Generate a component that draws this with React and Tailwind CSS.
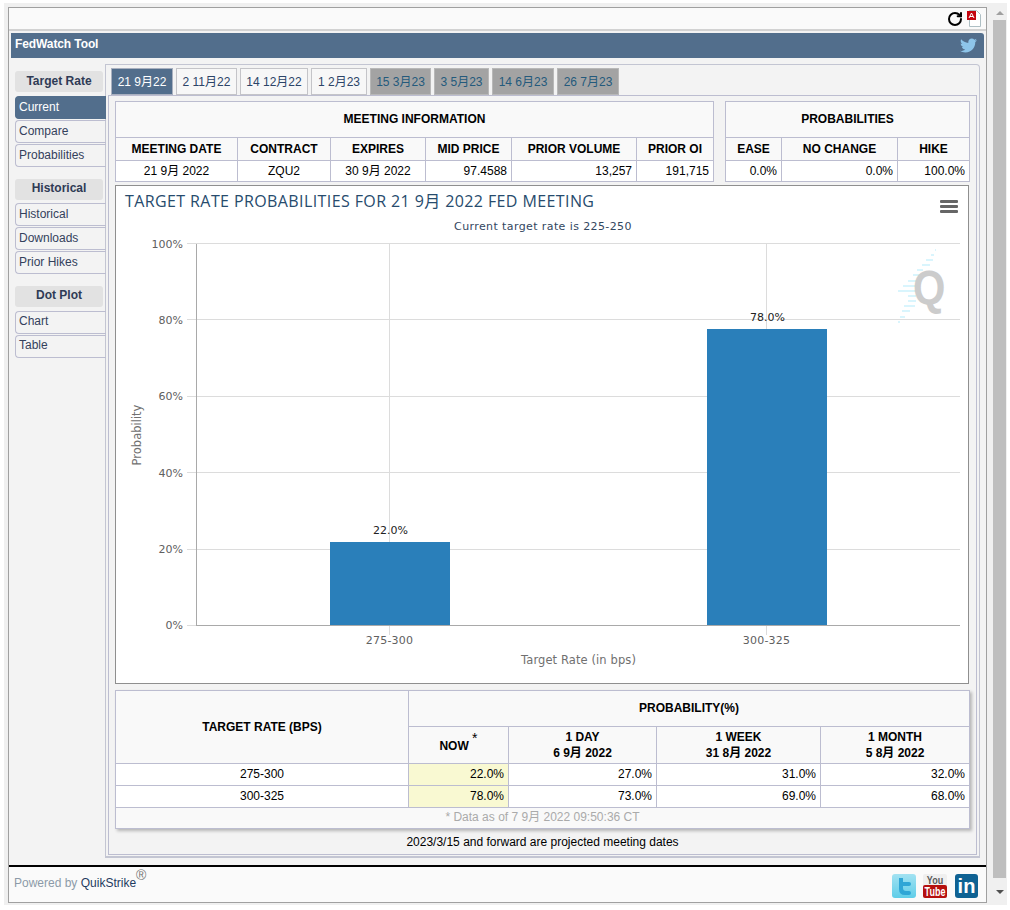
import { RotateCw } from "lucide-react";
import { FaTwitter } from "react-icons/fa";

const LINE = "border-[#bcbdd0]";

const TABS = [
  { label: "21 9月22", w: "w-[62px]", active: true },
  { label: "2 11月22", w: "w-[61px]" },
  { label: "14 12月22", w: "w-[68px]" },
  { label: "1 2月23", w: "w-[56px]" },
  { label: "15 3月23", w: "w-[61px]", off: true },
  { label: "3 5月23", w: "w-[55px]", off: true },
  { label: "14 6月23", w: "w-[62px]", off: true },
  { label: "26 7月23", w: "w-[62px]", off: true },
];

const NAV = [
  { title: "Target Rate", head: "mb-1 pb-[2px]", items: ["Current", "Compare", "Probabilities"] },
  { title: "Historical", head: "mb-[3px] pb-1", items: ["Historical", "Downloads", "Prior Hikes"] },
  { title: "Dot Plot", head: "mb-1 pb-1", items: ["Chart", "Table"] },
];

function SideNav() {
  return (
    <div className="relative z-10 -mr-px flex w-[97px] shrink-0 flex-col pt-[7px] pl-[6px]">
      {NAV.map((g) => (
        <div key={g.title} className="mb-[11px]">
          <div className={"mr-[3px] flex h-[21px] w-[88px] items-center justify-center rounded-[3px] bg-[#e2e2e2] text-xs font-bold text-[#2f3b55] " + g.head}>
            {g.title}
          </div>
          {g.items.map((it) => (
            <div
              key={it}
              className={
                "mb-px flex h-[23px] items-center rounded-l-[4px] border border-r-0 pl-[3px] text-xs " +
                (it === "Chart" || it === "Table" ? "pb-1 " : "pb-[2px] ") +
                (it === "Current"
                  ? "border-[#526e8c] bg-[#526e8c] text-white"
                  : LINE + " text-[#33415c]")
              }
            >
              {it}
            </div>
          ))}
        </div>
      ))}
    </div>
  );
}

function Th({ children, className = "", ...rest }) {
  return (
    <th {...rest} className={"border " + LINE + " bg-[#f9f9f9] p-0 text-center text-xs font-bold text-black " + className}>
      {children}
    </th>
  );
}

function Td({ children, className = "bg-white", align = "text-right pr-1" }) {
  return <td className={"border " + LINE + " p-0 text-xs text-black " + align + " " + className}>{children}</td>;
}

function InfoTables() {
  return (
    <div className="flex justify-between pr-[6px] pl-[6px]">
      <table className="w-[598px] table-fixed border-collapse">
        <colgroup>
          <col className="w-[122px]" />
          <col className="w-[93px]" />
          <col className="w-[95px]" />
          <col className="w-[86px]" />
          <col className="w-[125px]" />
          <col className="w-[77px]" />
        </colgroup>
        <tbody>
          <tr className="h-[36px]">
            <Th colSpan={6} className="pb-[2px]">MEETING INFORMATION</Th>
          </tr>
          <tr className="h-[23px]">
            {["MEETING DATE", "CONTRACT", "EXPIRES", "MID PRICE", "PRIOR VOLUME", "PRIOR OI"].map((h) => (
              <Th key={h}>{h}</Th>
            ))}
          </tr>
          <tr className="h-[21px]">
            <Td align="text-center">21 9月 2022</Td>
            <Td align="text-center">ZQU2</Td>
            <Td align="text-center">30 9月 2022</Td>
            <Td>97.4588</Td>
            <Td>13,257</Td>
            <Td>191,715</Td>
          </tr>
        </tbody>
      </table>
      <table className="w-[244px] table-fixed border-collapse">
        <colgroup>
          <col className="w-[56px]" />
          <col className="w-[116px]" />
          <col className="w-[72px]" />
        </colgroup>
        <tbody>
          <tr className="h-[36px]">
            <Th colSpan={3} className="pb-[2px]">PROBABILITIES</Th>
          </tr>
          <tr className="h-[23px]">
            <Th>EASE</Th>
            <Th>NO CHANGE</Th>
            <Th>HIKE</Th>
          </tr>
          <tr className="h-[21px]">
            <Td>0.0%</Td>
            <Td>0.0%</Td>
            <Td>100.0%</Td>
          </tr>
        </tbody>
      </table>
    </div>
  );
}

const STREAK = [
  [819, 820, 64], [815, 818, 69], [810, 817, 74], [806, 814, 79], [801, 807, 84],
  [797, 804, 89], [792, 801, 95], [787, 800, 100], [782, 800, 105], [792, 800, 110],
  [792, 800, 115], [788, 799, 120], [786, 794, 125], [784, 789, 131], [782, 784, 136],
];

// value, grid line y, label baseline y
const TICKS = [
  [0, 439.5, 443],
  [20, 363.5, 367],
  [40, 286.5, 291],
  [60, 210.5, 214],
  [80, 133.5, 138],
  [100, 57.5, 62],
];

function Chart() {
  return (
    <div className="mt-[3px] ml-[6px] h-[499px] w-[854px] border border-[#8f8f8f] bg-white">
      <svg width="852" height="497" className="block font-['DejaVu_Sans','Noto_Sans_CJK_SC',sans-serif]">
        <text x="9" y="21" fontSize="16" fill="#274b6d" className="font-['Open_Sans','Noto_Sans_CJK_SC',sans-serif]" letterSpacing="0.4">
          TARGET RATE PROBABILITIES FOR 21 9月 2022 FED MEETING
        </text>
        <text x="427" y="44" fontSize="11" fill="#33475f" textAnchor="middle" letterSpacing="0.4">
          Current target rate is 225-250
        </text>

        {TICKS.map(([t, line, label]) => (
          <g key={t}>
            <line x1="71" x2={t > 0 ? 844 : 81} y1={line} y2={line} stroke="#dcdcdc" />
            <text x="67" y={label} fontSize="11" fill="#606060" textAnchor="end">
              {t}%
            </text>
          </g>
        ))}
        <line x1="273.5" x2="273.5" y1="58" y2="449" stroke="#dcdcdc" />
        <line x1="650.5" x2="650.5" y1="58" y2="449" stroke="#dcdcdc" />
        <line x1="80.5" x2="80.5" y1="58" y2="440" stroke="#a9a9a9" />
        <line x1="81" x2="844" y1="439.5" y2="439.5" stroke="#a9a9a9" />

        <rect x="214" y="356" width="120" height="83" fill="#2a7fba" />
        <rect x="591" y="143" width="120" height="296" fill="#2a7fba" />
        <text x="274.5" y="348" fontSize="11" fill="#222222" textAnchor="middle">22.0%</text>
        <text x="651.5" y="135" fontSize="11" fill="#222222" textAnchor="middle">78.0%</text>

        <text x="273.5" y="458" fontSize="11" fill="#606060" textAnchor="middle" letterSpacing="0.2">275-300</text>
        <text x="650.5" y="458" fontSize="11" fill="#606060" textAnchor="middle" letterSpacing="0.2">300-325</text>
        <text x="462.5" y="478" fontSize="11.5" fill="#707070" textAnchor="middle" letterSpacing="0.1">Target Rate (in bps)</text>
        <text transform="translate(25 249) rotate(-90)" fontSize="11.5" fill="#707070" textAnchor="middle">Probability</text>

        {/* menu button */}
        <rect x="824" y="14" width="18" height="3" rx="1" fill="#666666" />
        <rect x="824" y="19" width="18" height="3" rx="1" fill="#666666" />
        <rect x="824" y="24" width="18" height="3" rx="1" fill="#666666" />

        {/* watermark */}
        {STREAK.map(([a, b, c]) => (
          <line key={c} x1={a} x2={b} y1={c} y2={c} stroke="#cdf2fc" strokeWidth="1.5" />
        ))}
        <text transform="translate(797 118) scale(0.85 1)" fontSize="49" fontWeight="700" fill="#cccccc" className="font-['Liberation_Sans',sans-serif]">
          Q
        </text>
      </svg>
    </div>
  );
}

function RateTable() {
  const rows = [
    ["275-300", "22.0%", "27.0%", "31.0%", "32.0%"],
    ["300-325", "78.0%", "73.0%", "69.0%", "68.0%"],
  ];
  return (
    <table className="mt-[6px] ml-[6px] w-[854px] table-fixed border-collapse shadow-[2px_2px_3px_rgba(0,0,0,0.25)]">
      <colgroup>
        <col className="w-[293px]" />
        <col className="w-[100px]" />
        <col className="w-[148px]" />
        <col className="w-[164px]" />
        <col className="w-[149px]" />
      </colgroup>
      <tbody>
        <tr className="h-[36px]">
          <Th rowSpan={2}>TARGET RATE (BPS)</Th>
          <Th colSpan={4} className="pb-[2px]">PROBABILITY(%)</Th>
        </tr>
        <tr className="h-[37px]">
          <Th>
            NOW <sup className="text-sm font-normal">*</sup>
          </Th>
          <Th>1 DAY<br />6 9月 2022</Th>
          <Th>1 WEEK<br />31 8月 2022</Th>
          <Th>1 MONTH<br />5 8月 2022</Th>
        </tr>
        {rows.map((r) => (
          <tr key={r[0]} className="h-[22px]">
            <Td align="text-center pb-[2px]">{r[0]}</Td>
            <Td align="text-right pr-1 pb-[2px]" className="bg-[#f9f9d2]">{r[1]}</Td>
            <Td align="text-right pr-1 pb-[2px]">{r[2]}</Td>
            <Td align="text-right pr-1 pb-[2px]">{r[3]}</Td>
            <Td align="text-right pr-1 pb-[2px]">{r[4]}</Td>
          </tr>
        ))}
        <tr className="h-[21px]">
          <td colSpan={5} className={"border " + LINE + " bg-[#f9f9f9] p-0 pb-[2px] text-center text-xs text-[#aaaaaa]"}>
            * Data as of 7 9月 2022 09:50:36 CT
          </td>
        </tr>
      </tbody>
    </table>
  );
}

function Tabs() {
  return (
    <div className="flex h-[30px] gap-[3px] pt-[3px] pl-[5px]">
      {TABS.map((t) => (
        <div
          key={t.label}
          className={
            "flex h-[27px] items-center justify-center border text-xs " + t.w + " " +
            (t.active
              ? "border-[#a9b0bf] bg-[#526e8c] text-white"
              : t.off
                ? "border-[#b8b8b8] bg-[#a3a3a3] text-[#245a7c]"
                : "border-[#c4c4c8] bg-[#f7f7f7] text-[#2c4468]")
          }
        >
          {t.label}
        </div>
      ))}
    </div>
  );
}

function SocialIcons() {
  return (
    <div className="flex gap-[7px] pt-[7px] pr-2">
      <svg width="24" height="24" viewBox="0 0 24 24">
        <defs>
          <linearGradient id="tw" x1="0" y1="0" x2="0" y2="1">
            <stop offset="0" stopColor="#a2e2f2" />
            <stop offset="1" stopColor="#5fcde8" />
          </linearGradient>
        </defs>
        <rect width="24" height="24" rx="3" fill="url(#tw)" />
        <path d="M7 4 h4 v4 h6 q2 0 2 2 t-2 2 h-6 v2 q0 3 3 3 h3 q2 0 2 2 t-2 2 h-4 q-6 0 -6 -6 z" fill="#2fa6d6" />
      </svg>
      <svg width="24" height="24" viewBox="0 0 24 24" className="font-['Liberation_Sans',sans-serif]">
        <rect width="24" height="24" rx="2" fill="#efefef" />
        <rect y="11" width="24" height="13" rx="2" fill="#b5100f" />
        <text transform="translate(12 10) scale(1 1.3)" fontSize="9" fontWeight="700" fill="#5a5a5a" textAnchor="middle">You</text>
        <text transform="translate(12 22) scale(1 1.4)" fontSize="9" fontWeight="700" fill="#ffffff" textAnchor="middle">Tube</text>
      </svg>
      <svg width="23" height="24" viewBox="0 0 23 24" className="ml-px font-['Liberation_Sans',sans-serif]">
        <rect width="23" height="24" rx="3" fill="#0f6293" />
        <text x="11.5" y="19" fontSize="20" fontWeight="700" fill="#ffffff" textAnchor="middle">in</text>
      </svg>
    </div>
  );
}

export default function App() {
  return (
    <div className="h-[910px] w-[1010px] bg-white pt-[3px] pl-1 font-['Liberation_Sans','Noto_Sans_CJK_SC',sans-serif]">
      <div className="flex h-[902px] w-[1003px] bg-[#f0f0f0] pt-1 pl-1">
        <div className="flex h-[896px] w-[979px] shrink-0 flex-col border border-[#a0a0a0] bg-[#f3f3f3]">
          {/* toolbar */}
          <div className="flex h-[23px] shrink-0 items-center justify-end gap-[4px] border-b-2 border-[#d2d2d2] bg-[#fafafa] pr-[5px]">
            <RotateCw size={16} strokeWidth={3} className="text-black" />
            <svg width="14" height="17" viewBox="0 0 14 17">
              <path d="M2.5 .5 h7 l4 4 v12 h-11 z" fill="#ffffff" stroke="#aebfc4" />
              <rect x="0" y="1" width="9" height="9" fill="#c4040f" />
              <path d="M2 8 l2.5 -5 l2.5 5 M3 6.5 h3" fill="none" stroke="#ffffff" />
            </svg>
          </div>

          <div className="mx-[2px] mt-[2px] flex h-[25px] shrink-0 items-center justify-between rounded-tr-[3px] bg-[#526e8c] pr-[7px] pl-[4px]">
            <span className="pb-[3px] text-xs font-bold tracking-[-0.1px] text-white">FedWatch Tool</span>
            <FaTwitter size={17} className="text-[#8ec5ea]" />
          </div>

          <div className="mt-[6px] flex h-[794px] shrink-0">
            <SideNav />
            <div className="mr-[7px] h-[794px] w-[875px] shrink-0 rounded-tr-[4px] border border-b-2 border-[#c3c5d2] bg-[#f3f3f3]">
              <Tabs />
              <div className={"ml-[2px] h-[760px] w-[869px] border " + LINE + " pt-[5px]"}>
                <InfoTables />
                <Chart />
                <RateTable />
                <div className="mt-[5px] text-center text-xs text-black">
                  2023/3/15 and forward are projected meeting dates
                </div>
              </div>
            </div>
          </div>

          <div className="mt-[7px] h-[2px] shrink-0 bg-black" />
          <div className="flex flex-1 justify-between bg-[#fafafa]">
            <div className="pt-[5px] pl-[5px] text-xs text-[#8c9aa8]">
              Powered by <span className="text-[#1f3a5f]">QuikStrike</span>
              <sup className="text-sm font-light text-[#777777]">®</sup>
            </div>
            <SocialIcons />
          </div>
        </div>

        {/* scrollbar */}
        <div className="ml-[6px] flex h-[892px] w-[13px] shrink-0 flex-col items-center">
          <div className="mt-[4px] h-0 w-0 border-x-[4px] border-b-[4px] border-x-transparent border-b-[#a0a0a0]" />
          <div className="mt-[5px] h-[858px] w-[13px] bg-[#bebebe]" />
          <div className="mt-[12px] h-0 w-0 border-x-[4px] border-t-[4px] border-x-transparent border-t-[#505050]" />
        </div>
      </div>
    </div>
  );
}
